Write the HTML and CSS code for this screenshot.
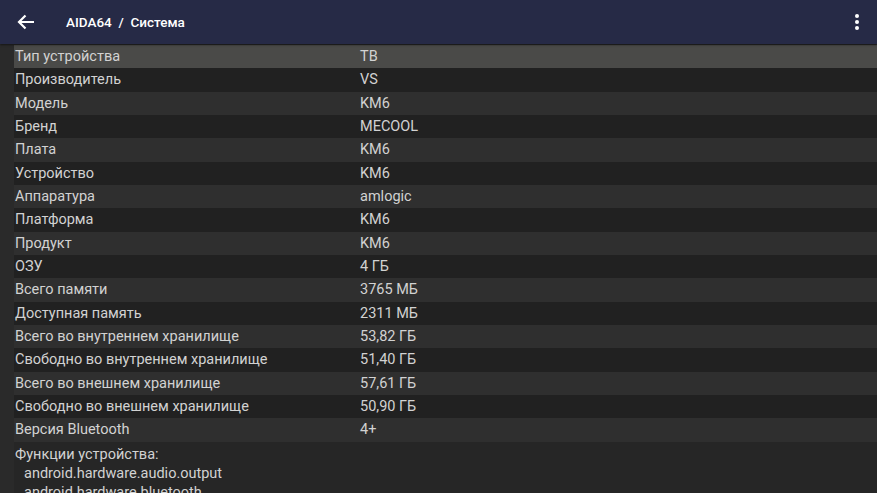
FILE: index.html
```html
<!DOCTYPE html>
<html>
<head>
<meta charset="utf-8">
<link rel="stylesheet" href="styles.css">
</head>
<body>
<header class="appbar">
  <svg class="back" width="18" height="16" viewBox="0 0 18 16"><path d="M17 8H2M8.5 1.5L2 8l6.5 6.5" fill="none" stroke="#fff" stroke-width="2.2"/></svg>
  <div class="title">AIDA64&nbsp; /&nbsp; Система</div>
  <div class="menu"><span></span><span></span><span></span></div>
</header>
<main class="content">
  <div class="list">
    <div class="row sel"><span class="k">Тип устройства</span><span class="v">ТВ</span></div>
    <div class="row"><span class="k">Производитель</span><span class="v">VS</span></div>
    <div class="row"><span class="k">Модель</span><span class="v">KM6</span></div>
    <div class="row"><span class="k">Бренд</span><span class="v">MECOOL</span></div>
    <div class="row"><span class="k">Плата</span><span class="v">KM6</span></div>
    <div class="row"><span class="k">Устройство</span><span class="v">KM6</span></div>
    <div class="row"><span class="k">Аппаратура</span><span class="v">amlogic</span></div>
    <div class="row"><span class="k">Платформа</span><span class="v">KM6</span></div>
    <div class="row"><span class="k">Продукт</span><span class="v">KM6</span></div>
    <div class="row"><span class="k">ОЗУ</span><span class="v">4 ГБ</span></div>
    <div class="row"><span class="k">Всего памяти</span><span class="v">3765 МБ</span></div>
    <div class="row"><span class="k">Доступная память</span><span class="v">2311 МБ</span></div>
    <div class="row"><span class="k">Всего во внутреннем хранилище</span><span class="v">53,82 ГБ</span></div>
    <div class="row"><span class="k">Свободно во внутреннем хранилище</span><span class="v">51,40 ГБ</span></div>
    <div class="row"><span class="k">Всего во внешнем хранилище</span><span class="v">57,61 ГБ</span></div>
    <div class="row"><span class="k">Свободно во внешнем хранилище</span><span class="v">50,90 ГБ</span></div>
    <div class="row"><span class="k">Версия Bluetooth</span><span class="v">4+</span></div>
    <div class="features">
      <div class="ftitle">Функции устройства:</div>
      <div class="fitem">android.hardware.audio.output</div>
      <div class="fitem">android.hardware.bluetooth</div>
    </div>
  </div>
</main>
</body>
</html>
```
FILE: styles.css
```css
html, body {
  margin: 0;
  padding: 0;
  background: #2a2a2a;
  overflow: hidden;
  height: 493px;
}
body {
  font-family: Roboto, "Noto Sans", sans-serif;
  color: #d2d2d2;
}
.appbar {
  height: 44px;
  background: #262a46;
  display: flex;
  align-items: center;
  box-shadow: 0 1px 2px rgba(0,0,0,0.5);
  position: relative;
  z-index: 1;
}
.back {
  margin-left: 17px;
  width: 18px;
  height: 16px;
}
.title {
  margin-left: 31px;
  color: #fff;
  font-size: 13.5px;
  font-weight: 500;
}
.menu {
  margin-left: auto;
  margin-right: 18px;
  display: flex;
  flex-direction: column;
  gap: 2px;
}
.menu span {
  width: 4px;
  height: 4px;
  border-radius: 50%;
  background: #fff;
}
.content {
  padding-left: 14px;
  padding-top: 1px;
}
.row {
  height: 23.33px;
  display: flex;
  align-items: center;
  font-size: 14.5px;
  background: #2f2f2f;
}
.row:nth-child(even) {
  background: #212121;
}
.row.sel {
  background: #4a4a48;
}
.k {
  width: 345px;
  padding-left: 1px;
}
.v {
  flex: 1;
}
.features {
  background: #262626;
  padding-top: 3px;
  font-size: 14.5px;
  line-height: 19px;
  padding-left: 1px;
}
.fitem {
  padding-left: 9px;
}
```
